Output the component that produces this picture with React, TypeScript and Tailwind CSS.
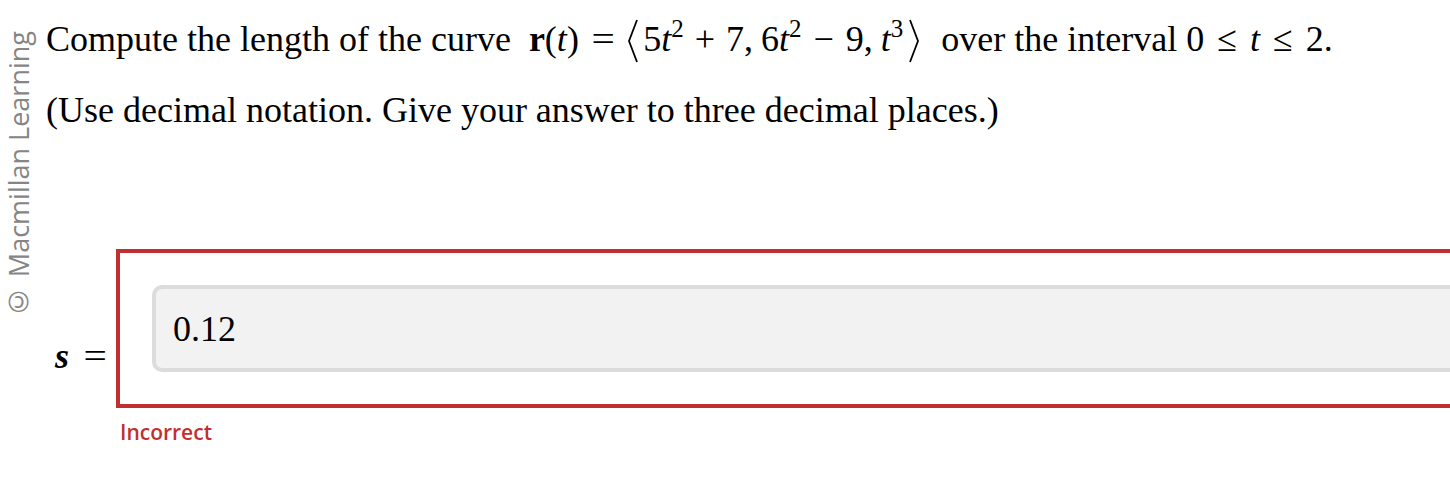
import React from "react";

function Sup({ children }: { children: React.ReactNode }) {
  return <span className="relative bottom-[14px] text-[25px] leading-none">{children}</span>;
}

function Bracket({ right = false }: { right?: boolean }) {
  return (
    <svg
      viewBox="0 0 12 44"
      className="inline-block w-[12px] h-[44px] -mb-[12px] align-baseline"
      fill="none"
      stroke="currentColor"
      strokeWidth="1.8"
    >
      <path d={right ? "M2 1 L10 22 L2 43" : "M10 1 L2 22 L10 43"} />
    </svg>
  );
}

export default function App() {
  return (
    <div className="w-[1450px] h-[488px] bg-white overflow-hidden text-black font-['Liberation_Serif',serif]">
      <div className="flex">
        {/* watermark rail */}
        <div className="w-[46px] shrink-0 pt-[31px] pl-[5px]">
          <div className="[writing-mode:vertical-rl] rotate-180 font-['Open_Sans',sans-serif] text-[27px] leading-none text-[#858585] whitespace-nowrap">
            © Macmillan Learning
          </div>
        </div>

        <div className="flex-1 flex flex-col">
          <p className="mt-[19px] text-[36px] leading-[40px] whitespace-nowrap">
            Compute the length of the curve <b className="ml-[9px]">r</b>(<i>t</i>)
            <span className="mx-[14px] inline-block scale-x-[1.15]">=</span>
            <Bracket />
            <span className="ml-[4px]">5</span>
            <i>t</i>
            <Sup>2</Sup>
            <span className="mx-[11px]">+</span>7,<span className="ml-[8px]">6</span>
            <i>t</i>
            <Sup>2</Sup>
            <span className="mx-[12px]">−</span>9,<span className="ml-[8px]" />
            <i>t</i>
            <Sup>3</Sup>
            <span className="mr-[5px]" />
            <Bracket right />
            <span className="ml-[21px]">over the interval 0</span>
            <span className="mx-[13px]">≤</span>
            <i>t</i>
            <span className="mx-[13px]">≤</span>2.
          </p>
          <p className="mt-[31px] text-[36px] leading-[40px] whitespace-nowrap">
            (Use decimal notation. Give your answer to three decimal places.)
          </p>

          <div className="mt-[119px] flex items-start">
            <div className="w-[70px] shrink-0 mt-[87px] pl-[9px] text-[36px] leading-[40px] whitespace-nowrap">
              <i className="font-semibold">s</i>
              <span className="ml-[16px] inline-block scale-x-[1.15]">=</span>
            </div>
            <div className="shrink-0">
              <div className="w-[1400px] border-4 border-[#c22f30] p-[32px]">
                <div className="h-[87px] border-4 border-[#dcdcdc] bg-[#f2f2f2] rounded-[10px] flex items-center pl-[17px] text-[36px] leading-none">
                  0.12
                </div>
              </div>
              <div className="mt-[12px] ml-[4px] font-['Open_Sans',sans-serif] font-semibold text-[21px] leading-[24px] text-[#c22f30]">
                Incorrect
              </div>
            </div>
          </div>
        </div>
      </div>
    </div>
  );
}
